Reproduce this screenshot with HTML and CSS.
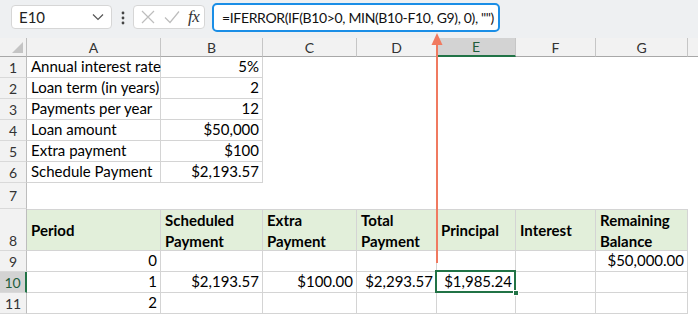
FILE: index.html
```html
<!DOCTYPE html>
<html>
<head>
<meta charset="utf-8">
<link rel="stylesheet" href="styles.css">
</head>
<body>
<div class="app">
  <div class="fbar">
    <div class="namebox">
      <span class="nb-text">E10</span>
      <svg class="chev" width="12" height="8" viewBox="0 0 12 8"><path d="M1 1.5 L6 6.5 L11 1.5" fill="none" stroke="#555" stroke-width="1.2"/></svg>
    </div>
    <div class="dots">
      <svg width="4" height="14" viewBox="0 0 4 14"><circle cx="2" cy="2" r="1.4" fill="#444"/><circle cx="2" cy="7" r="1.4" fill="#444"/><circle cx="2" cy="12" r="1.4" fill="#444"/></svg>
    </div>
    <div class="fxbox">
      <svg width="16" height="16" viewBox="0 0 16 16"><path d="M2 2 L14 14 M14 2 L2 14" stroke="#bdbdbd" stroke-width="1.2" fill="none"/></svg>
      <svg width="18" height="16" viewBox="0 0 18 16"><path d="M2 8.5 L7 13.5 L16 2.5" stroke="#bdbdbd" stroke-width="1.2" fill="none"/></svg>
      <span class="fx">fx</span>
    </div>
    <div class="formula">=IFERROR(IF(B10&gt;0, MIN(B10-F10, G9), 0), "")</div>
  </div>

  <div class="sheet">
    <!-- header row -->
    <div class="corner"><span class="tri"></span></div>
    <div class="ch">A</div><div class="ch">B</div><div class="ch">C</div><div class="ch">D</div>
    <div class="ch ch-sel">E</div><div class="ch">F</div><div class="ch">G</div><div class="ch ch-last"></div>

    <!-- row 1 -->
    <div class="rh">1</div>
    <div class="c b">Annual interest rate</div><div class="c b r">5%</div>
    <div class="c"></div><div class="c"></div><div class="c"></div><div class="c"></div><div class="c"></div><div class="c"></div>
    <!-- row 2 -->
    <div class="rh">2</div>
    <div class="c b">Loan term (in years)</div><div class="c b r">2</div>
    <div class="c"></div><div class="c"></div><div class="c"></div><div class="c"></div><div class="c"></div><div class="c"></div>
    <!-- row 3 -->
    <div class="rh">3</div>
    <div class="c b">Payments per year</div><div class="c b r">12</div>
    <div class="c"></div><div class="c"></div><div class="c"></div><div class="c"></div><div class="c"></div><div class="c"></div>
    <!-- row 4 -->
    <div class="rh">4</div>
    <div class="c b">Loan amount</div><div class="c b r">$50,000</div>
    <div class="c"></div><div class="c"></div><div class="c"></div><div class="c"></div><div class="c"></div><div class="c"></div>
    <!-- row 5 -->
    <div class="rh">5</div>
    <div class="c b">Extra payment</div><div class="c b r">$100</div>
    <div class="c"></div><div class="c"></div><div class="c"></div><div class="c"></div><div class="c"></div><div class="c"></div>
    <!-- row 6 -->
    <div class="rh">6</div>
    <div class="c b">Schedule Payment</div><div class="c b r">$2,193.57</div>
    <div class="c"></div><div class="c"></div><div class="c"></div><div class="c"></div><div class="c"></div><div class="c"></div>
    <!-- row 7 -->
    <div class="rh">7</div>
    <div class="c"></div><div class="c"></div><div class="c"></div><div class="c"></div><div class="c"></div><div class="c"></div><div class="c"></div><div class="c"></div>
    <!-- row 8 -->
    <div class="rh rh-bottom">8</div>
    <div class="c hd">Period</div>
    <div class="c hd">Scheduled<br>Payment</div>
    <div class="c hd">Extra<br>Payment</div>
    <div class="c hd">Total<br>Payment</div>
    <div class="c hd">Principal</div>
    <div class="c hd">Interest</div>
    <div class="c hd">Remaining<br>Balance</div>
    <div class="c"></div>
    <!-- row 9 -->
    <div class="rh">9</div>
    <div class="c b r">0</div><div class="c b"></div><div class="c b"></div><div class="c b"></div><div class="c b"></div><div class="c b"></div><div class="c b r">$50,000.00</div><div class="c"></div>
    <!-- row 10 -->
    <div class="rh rh-sel">10</div>
    <div class="c b r">1</div><div class="c b r">$2,193.57</div><div class="c b r">$100.00</div><div class="c b r">$2,293.57</div>
    <div class="c b r sel">$1,985.24<span class="handle"></span></div>
    <div class="c b"></div><div class="c b"></div><div class="c"></div>
    <!-- row 11 -->
    <div class="rh">11</div>
    <div class="c b r">2</div><div class="c b"></div><div class="c b"></div><div class="c b"></div><div class="c b"></div><div class="c b"></div><div class="c b"></div><div class="c"></div>
  </div>

  <svg class="arrow" width="14" height="234" viewBox="0 0 14 234">
    <path d="M7 0 L12.5 12 L1.5 12 Z" fill="#f07a60"/>
    <rect x="6" y="11" width="2" height="219" fill="#f07a60"/>
  </svg>
</div>
</body>
</html>
```

FILE: styles.css
```css
* { box-sizing: border-box; }
html, body { margin: 0; padding: 0; background: #ffffff; }
body { font-family: "Lato", "Liberation Sans", sans-serif; font-size: 15px; color: #000; }

.app { position: relative; width: 698px; height: 316px; overflow: hidden; }

.fbar {
  height: 38px;
  background: #eef0f2;
  display: flex;
  align-items: flex-start;
  padding-top: 3px;
}
.namebox {
  margin-top: 2px;
  margin-left: 11px;
  width: 101px;
  height: 24px;
  background: #fff;
  border: 1px solid #d6d6d6;
  border-radius: 4px;
  display: flex;
  align-items: center;
  justify-content: space-between;
  padding: 0 7px 0 7px;
  font-size: 15px;
  color: #222;
}
.dots {
  width: 21px;
  height: 29px;
  display: flex;
  align-items: center;
  justify-content: center;
}
.fxbox {
  margin-top: 2px;
  width: 72px;
  height: 24px;
  background: #fff;
  border: 1px solid #d6d6d6;
  border-radius: 4px;
  display: flex;
  align-items: center;
  gap: 7px;
  padding-left: 6px;
}
.fx {
  font-family: "Liberation Serif", "DejaVu Serif", serif;
  font-style: italic;
  font-size: 17px;
  color: #333;
  letter-spacing: -0.5px;
}
.formula {
  margin-left: 7px;
  width: 288px;
  height: 29px;
  background: #fff;
  border: 2px solid #1a8ee6;
  border-radius: 5px;
  display: flex;
  align-items: center;
  padding-left: 8px;
  font-size: 14px;
  letter-spacing: -0.35px;
  color: #111;
  white-space: nowrap;
  overflow: hidden;
}

.sheet {
  display: grid;
  grid-template-columns: 27px 134px 102px 94px 80px 79px 80px 92px 10px;
  grid-template-rows: 19px 21px 21px 21px 21px 21px 21px 26px 42px 21px 21px 21px 10px;
}

.corner {
  position: relative;
  background: #f2f2f2;
  border-right: 1px solid #bdbdbd;
  border-bottom: 1px solid #a8a8a8;
}
.tri {
  position: absolute;
  right: 3px;
  bottom: 3px;
  width: 0;
  height: 0;
  border-left: 11px solid transparent;
  border-bottom: 11px solid #c4c4c4;
}
.ch {
  background: #f2f2f2;
  border-right: 1px solid #c6c6c6;
  border-bottom: 1px solid #a8a8a8;
  display: flex;
  align-items: center;
  justify-content: center;
  font-size: 14px;
  color: #333;
}
.ch-sel {
  background: #d3d3d3;
  border-bottom: 2px solid #217346;
  color: #1e5d3b;
}
.ch-last { border-right: none; }

.rh {
  background: #f2f2f2;
  border-right: 1px solid #bdbdbd;
  border-bottom: 1px solid #d9d9d9;
  display: flex;
  align-items: center;
  justify-content: center;
  font-size: 14px;
  color: #333;
}
.rh-bottom { align-items: flex-end; padding-bottom: 1px; }
.rh-sel {
  background: #d3d3d3;
  border-right: 2px solid #217346;
  color: #1e5d3b;
}

.c {
  display: flex;
  align-items: flex-end;
  padding: 0 3px 1px 4px;
  white-space: nowrap;
  line-height: 20px;
}
.b {
  border-right: 1px solid #d4d4d4;
  border-bottom: 1px solid #d4d4d4;
}
.r { justify-content: flex-end; }

.hd {
  background: #e2efda;
  border-top: 1px solid #d4d4d4;
  border-right: 1px solid #d4d4d4;
  border-bottom: 1px solid #d4d4d4;
  font-weight: bold;
  align-items: center;
  line-height: 21px;
  padding-bottom: 0;
  padding-top: 1px;
}

.sel { position: relative; }
.sel::after {
  content: "";
  position: absolute;
  left: -2px;
  top: -2px;
  right: -1px;
  bottom: -1px;
  border: 2px solid #217346;
}
.handle {
  position: absolute;
  right: -4px;
  bottom: -4px;
  width: 6px;
  height: 6px;
  background: #217346;
  border: 1px solid #fff;
  z-index: 2;
}

.arrow {
  position: absolute;
  left: 430px;
  top: 33px;
}
```
